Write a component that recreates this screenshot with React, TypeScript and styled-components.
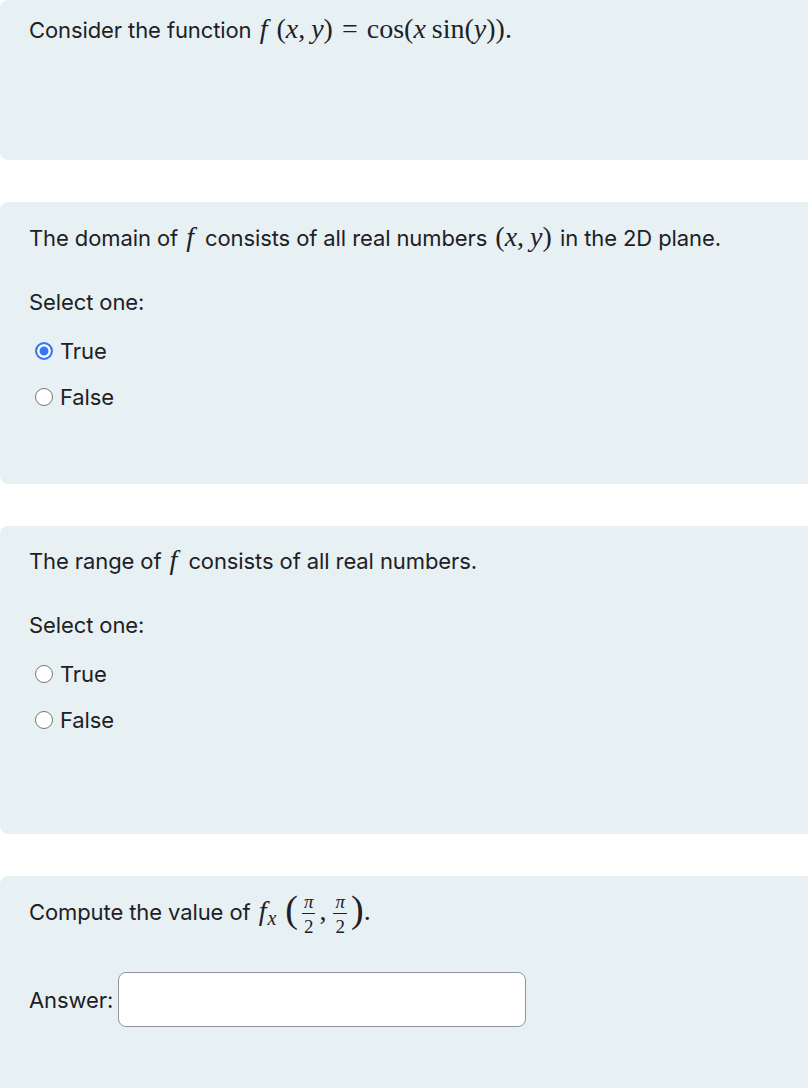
import React from 'react'
import styled, { createGlobalStyle } from 'styled-components'

const Global = createGlobalStyle`
  body {
    margin: 0;
    background: #fff;
    overflow: hidden;
    font-family: Inter, "Liberation Sans", sans-serif;
    color: #1d2125;
  }
`

const Page = styled.div`
  display: flex;
  flex-direction: column;
  gap: 42px;
  width: 808px;
`

const Card = styled.div<{ $top: number; $height: number }>`
  box-sizing: border-box;
  width: 830px;
  min-height: ${p => p.$height}px;
  padding: ${p => p.$top}px 29px 0;
  background: #e7f0f3;
  border-radius: 8px;
`

const Text = styled.div`
  font-size: 22px;
  line-height: 30px;
  letter-spacing: -0.1px;
  white-space: nowrap;
`

const Prompt = styled(Text)`
  margin-top: 34px;
`

const Options = styled.div`
  display: flex;
  flex-direction: column;
  gap: 16px;
  margin-top: 19px;
  padding-left: 6px;
`

const Option = styled.label`
  display: flex;
  align-items: center;
  gap: 7px;
  font-size: 22px;
  line-height: 30px;
  letter-spacing: -0.1px;
`

const Radio = styled.span<{ $checked?: boolean }>`
  box-sizing: border-box;
  width: 18px;
  height: 18px;
  border-radius: 50%;
  background: ${p => (p.$checked ? '#3478f6' : '#fff')};
  border: ${p => (p.$checked ? '2px solid #3478f6' : '1px solid #767676')};
  box-shadow: ${p => (p.$checked ? 'inset 0 0 0 2.5px #fff' : 'none')};
`

const M = styled.span`
  font-family: "Liberation Serif", "DejaVu Serif", serif;
  font-size: 28px;
  line-height: 0;
  letter-spacing: 0;
  margin: 0 2px;
`

const I = styled.i`
  font-family: "Liberation Serif", "DejaVu Serif", serif;
  font-style: italic;
`

const Fn = styled(I)`
  margin-right: 9px;
`

const Gap = styled.span<{ $w: number }>`
  display: inline-block;
  width: ${p => p.$w}px;
`

const Op = styled.span`
  margin: 0 9px;
`

const Sub = styled.sub`
  font-size: 20px;
  line-height: 0;
  vertical-align: -5px;
  margin-left: 1px;
  margin-right: 9px;
`

const BigParen = styled.span`
  display: inline-block;
  font-size: 38px;
  line-height: 1;
  margin: -9px 0;
  transform: translateY(2px);
`

const Frac = styled.span`
  display: inline-flex;
  flex-direction: column;
  align-items: center;
  vertical-align: 12px;
  font-size: 19px;
  line-height: 16px;
  margin: -10px 4px;
`

const Num = styled.span`
  padding: 0 2px 3px;
  border-bottom: 1px solid #1d2125;
  font-style: italic;
`

const Den = styled.span`
  padding-top: 5px;
`

const AnswerRow = styled.div`
  display: flex;
  align-items: center;
  gap: 5px;
  margin-top: 45px;
`

const Input = styled.input`
  box-sizing: border-box;
  width: 408px;
  height: 55px;
  border: 1px solid #8f959e;
  border-radius: 8px;
  background: #fff;
  outline: none;
`

const Half = () => (
  <Frac>
    <Num>π</Num>
    <Den>2</Den>
  </Frac>
)

export default function App() {
  return (
    <>
      <Global />
      <Page>
        <Card $top={15} $height={160}>
          <Text>
            Consider the function{' '}
            <M>
              <Fn>f</Fn>(<I>x</I>,<Gap $w={6} /><I>y</I>)<Op>=</Op>cos(<I>x</I><Gap $w={6} />sin(<I>y</I>)).
            </M>
          </Text>
        </Card>

        <Card $top={21} $height={282}>
          <Text>
            The domain of <M><Fn>f</Fn></M>consists of all real numbers <M>(<I>x</I>,<Gap $w={6} /><I>y</I>)</M> in the 2D plane.
          </Text>
          <Prompt>Select one:</Prompt>
          <Options>
            <Option><Radio $checked />True</Option>
            <Option><Radio />False</Option>
          </Options>
        </Card>

        <Card $top={20} $height={308}>
          <Text>
            The range of <M><Fn>f</Fn></M>consists of all real numbers.
          </Text>
          <Prompt>Select one:</Prompt>
          <Options>
            <Option><Radio />True</Option>
            <Option><Radio />False</Option>
          </Options>
        </Card>

        <Card $top={21} $height={230}>
          <Text>
            Compute the value of{' '}
            <M>
              <I>f</I><Sub><I>x</I></Sub>
              <BigParen>(</BigParen>
              <Half />,<Gap $w={3} />
              <Half />
              <BigParen>)</BigParen>.
            </M>
          </Text>
          <AnswerRow>
            <Text>Answer:</Text>
            <Input />
          </AnswerRow>
        </Card>
      </Page>
    </>
  )
}
